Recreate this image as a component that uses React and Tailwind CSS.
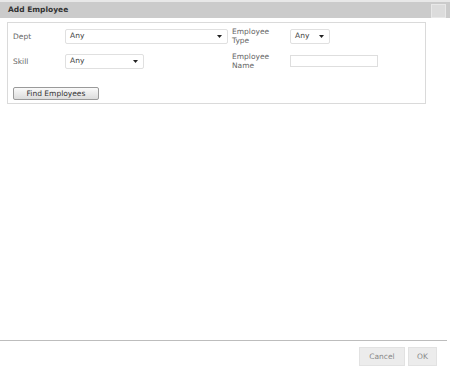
import React from 'react';

const font = { fontFamily: '"DejaVu Sans", Verdana, sans-serif' };

const Select = ({ width, value = 'Any' }) => (
    <div className={`${width} h-[15px] flex items-center justify-between bg-white border border-[#e0e0e0] rounded-[2px] pl-[4px] pr-[5px] text-[7.5px] text-[#444]`}>
        <span>{value}</span>
        <svg width="5" height="3" viewBox="0 0 5 3">
            <path d="M0 0h5L2.5 3z" fill="#222" />
        </svg>
    </div>
);

const Label = ({ children }) => (
    <div className="text-[7.5px] leading-[9px] text-[#666]">{children}</div>
);

export default function App() {
    return (
        <div className="w-[450px] h-[366px] bg-white flex flex-col overflow-hidden" style={font}>
            <div className="h-[18px] bg-[#cbcbcb] border-t-2 border-[#e8e8e8] flex items-center justify-between pl-[8px] pr-[4px]">
                <span className="text-[7.5px] font-bold text-[#333]">Add Employee</span>
                <div className="w-[15px] h-[14px] bg-[#dcdcdc] border border-[#e8e8e8] mt-[1px]" />
            </div>

            <div className="mx-[7px] mt-[4px] w-[419px] border border-[#dadada] pt-[4px] pb-[3px] pl-[5px]">
                <div className="grid grid-cols-[52px_167px_58px_auto] items-center gap-y-[7px]">
                    <Label>Dept</Label>
                    <Select width="w-[163px]" />
                    <Label>Employee<br />Type</Label>
                    <Select width="w-[40px]" />

                    <Label>Skill</Label>
                    <Select width="w-[79px]" />
                    <Label>Employee<br />Name</Label>
                    <div className="w-[88px] h-[12px] bg-white border border-[#dedede]" />
                </div>
                <button className="mt-[17px] w-[86px] h-[13px] rounded-[2px] border border-[#9a9a9a] bg-gradient-to-b from-[#fafafa] to-[#dcdcdc] text-[7.5px] text-[#333] flex items-center justify-center">
                    Find Employees
                </button>
            </div>

            <div className="flex-1" />

            <div className="h-[26px] flex flex-col">
                <div className="w-[447px] h-px bg-[#bdbdbd]" />
                <div className="flex justify-end gap-[3px] pt-[6px] pr-[13px]">
                    <button className="w-[46px] h-[19px] bg-[#ececec] border border-[#e2e2e2] text-[7.5px] text-[#888]">Cancel</button>
                    <button className="w-[29px] h-[19px] bg-[#ececec] border border-[#e2e2e2] text-[7.5px] text-[#888]">OK</button>
                </div>
            </div>
        </div>
    );
}
